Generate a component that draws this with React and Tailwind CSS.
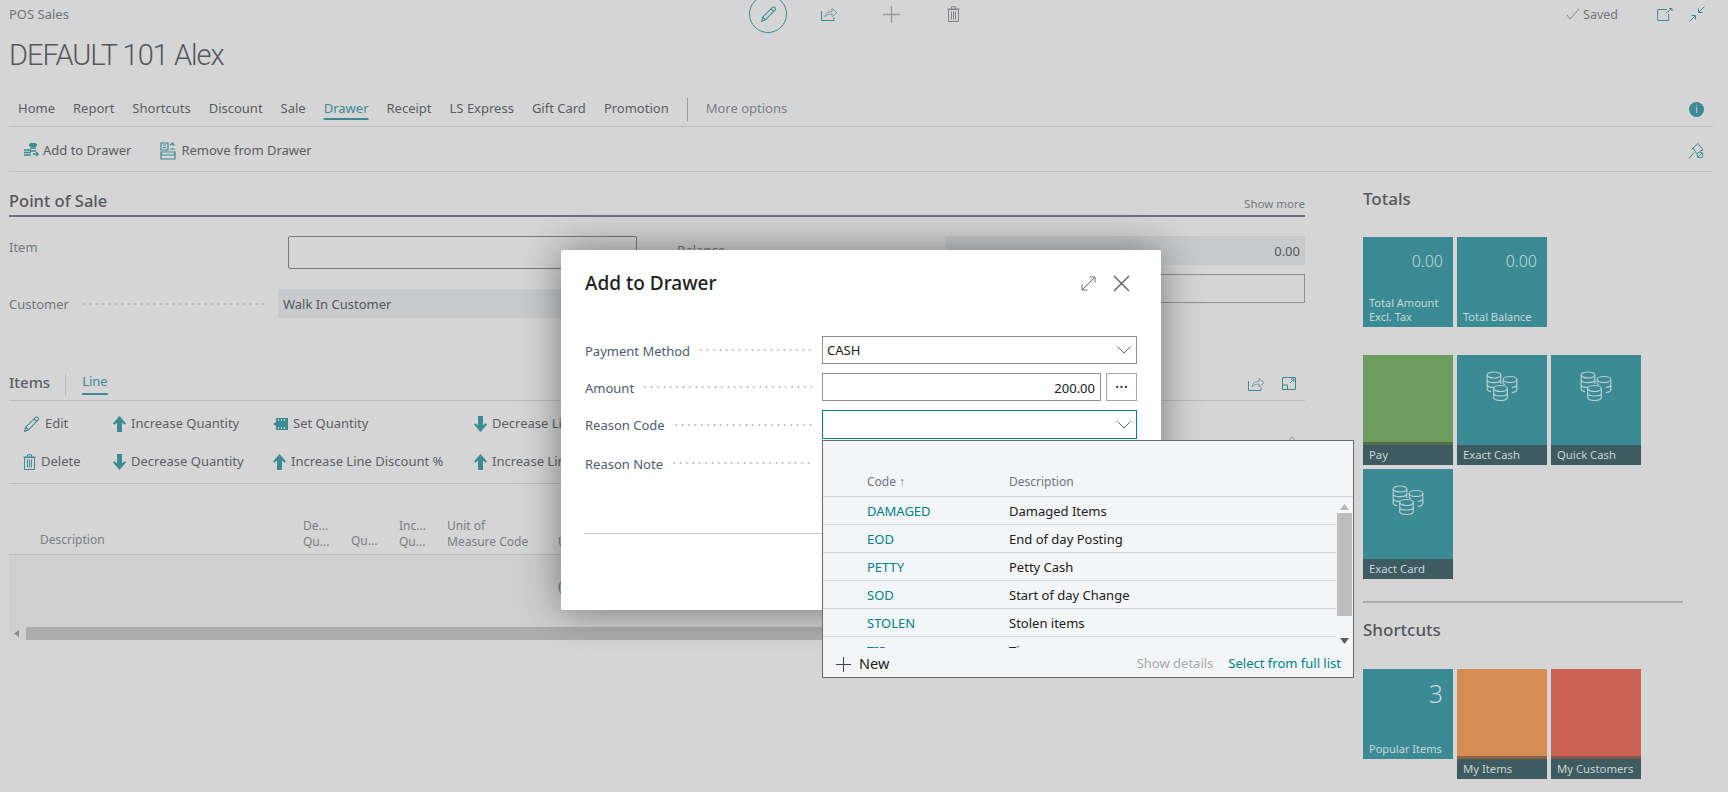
import React from 'react';

const TEAL = '#3c8a93';

// small stroked icon wrapper
const Ico = ({ w = 16, h = 16, vb = '0 0 16 16', color = TEAL, sw = 1, className = '', children }) => (
  <svg width={w} height={h} viewBox={vb} fill="none" stroke={color} strokeWidth={sw} className={`shrink-0 ${className}`}>
    {children}
  </svg>
);

const PencilIcon = ({ w = 17, h = 17, color = TEAL }) => (
  <Ico w={w} h={h} color={color}>
    <path d="M1.500 14.500l1-4L11.500 1.500c.8-.8 2-.8 2.600-.1s.6 1.800-.1 2.500L5 13.200l-3.500 1.300zM2.500 10.500l3 2.700M10.300 2.800l2.900 2.800" />
  </Ico>
);

const TrashIcon = ({ w = 13, h = 16, color = TEAL }) => (
  <Ico w={w} h={h} vb="0 0 13 16" color={color}>
    <path d="M1.500 3.500h10v12h-10zM.5 3h12M4.500 3V.8h4V3M4.500 5.500v8M6.500 5.500v8M8.500 5.500v8" />
  </Ico>
);

const ShareIcon = ({ color = TEAL }) => (
  <Ico w={17} h={15} vb="0 0 17 15" color={color}>
    <path d="M.5 5v9.500h12.500v-3" />
    <path d="M4 11c0-3.500 3-5.500 7-5.500V2.500l5 4.200-5 4.100V8c-3 0-5.500 1-7 3z" stroke="#7d9ea3" />
  </Ico>
);

const ArrowUp = () => (
  <svg width="13" height="16" viewBox="0 0 13 16" fill={TEAL} className="shrink-0">
    <path d="M6.500 0L13 7.500l-1.500 1.200L9 6.500V16H4V6.500L1.500 8.700 0 7.500z" />
  </svg>
);

const ArrowDown = () => (
  <svg width="13" height="16" viewBox="0 0 13 16" fill={TEAL} className="shrink-0">
    <path d="M6.500 16L13 8.500l-1.500-1.200L9 9.500V0H4v9.500L1.500 7.300 0 8.500z" />
  </svg>
);

const Coins = () => (
  <svg width="32" height="30" viewBox="0 0 32 30" fill="none" stroke="#b4ced1" strokeWidth="1.200">
    <ellipse cx="8" cy="4" rx="6.800" ry="3" />
    <path d="M1.200 4v14c0 1.200 1.500 2.200 3.800 2.700M14.800 4v9M1.200 8.700c0 1.700 3 3 6.800 3s6.800-1.300 6.800-3M1.200 13.400c0 1.700 3 3 6.800 3" />
    <ellipse cx="24" cy="8.500" rx="6.800" ry="3" />
    <path d="M17.200 8.500v4M30.800 8.500v10c0 1.500-2 2.700-5 3M30.800 13.400c0 1.500-2 2.700-5 3M17.200 12.700c1 .5 1.600.8 2 1" />
    <ellipse cx="14.500" cy="17.500" rx="6.800" ry="3" />
    <path d="M7.700 17.500v9c0 1.700 3 3 6.800 3s6.800-1.300 6.800-3v-9M7.700 22c0 1.700 3 3 6.800 3s6.800-1.300 6.800-3" />
  </svg>
);

const Chevron = () => (
  <svg width="14" height="8" viewBox="0 0 14 8" fill="none" stroke="#5f6b7a" className="shrink-0">
    <path d="M.5.5L7 7l6.500-6.500" />
  </svg>
);

const Dots = () => (
  <span className="flex-1 h-1 bg-[radial-gradient(circle,#adadad_0.8px,transparent_1.1px)] bg-[length:6.4px_4px] bg-repeat-x"></span>
);

const Tile = ({ value, valueClass = 'text-[16px]', label, color = 'bg-[#3c8a93]', bar, strip, coins }) => (
  <div className={`w-[90px] flex flex-col ${bar ? 'h-[110px]' : 'h-[90px]'}`}>
    <div className={`${color} flex-1 relative min-h-0 flex flex-col text-[#c3d8da]`}>
      {value && <div className={`text-right pr-[10px] pt-[12px] leading-[24px] font-light ${valueClass}`}>{value}</div>}
      {coins && <div className="flex justify-center pt-[16px]"><Coins /></div>}
      {!bar && <div className="mt-auto px-[6px] pb-[3px] text-[11px] leading-[14px]">{label}</div>}
    </div>
    {strip && <div className={`h-[3px] ${strip}`}></div>}
    {bar && <div className="h-[20px] bg-[#3d5b60] px-[6px] text-[11.300px] leading-[19px] text-[#c8d4d5] whitespace-nowrap">{label}</div>}
  </div>
);

const ActionItem = ({ icon, text }) => (
  <div className="flex items-center gap-[5px] whitespace-nowrap text-[13px] text-[#5c6066]">
    {icon}
    <span>{text}</span>
  </div>
);

const tabs = ['Home', 'Report', 'Shortcuts', 'Discount', 'Sale', 'Drawer', 'Receipt', 'LS Express', 'Gift Card', 'Promotion'];

const reasons = [
  ['DAMAGED', 'Damaged Items'],
  ['EOD', 'End of day Posting'],
  ['PETTY', 'Petty Cash'],
  ['SOD', 'Start of day Change'],
  ['STOLEN', 'Stolen items'],
  ['TIP', 'Tips'],
];

export default function App() {
  return (
    <div className="relative w-full h-[792px] overflow-hidden bg-[#d5d5d5] font-['Noto_Sans',sans-serif] text-[13px] text-[#5a5d62]">
      {/* page header */}
      <div className="flex items-center h-[28px] pl-[9px] pr-[23px]">
        <span className="w-[740px] pt-[2px] text-[13px] text-[#70747a]">POS Sales</span>
        <div className="w-[38px] h-[38px] shrink-0 rounded-full border border-[#3c8a93] flex items-center justify-center">
          <PencilIcon />
        </div>
        <div className="ml-[34px] -mt-[2px] flex"><ShareIcon /></div>
        <svg width="17" height="17" viewBox="0 0 17 17" stroke="#96999c" strokeWidth="1.300" className="ml-[45px] shrink-0"><path d="M8.500 0v17M0 8.500h17" /></svg>
        <div className="ml-[47px] flex"><TrashIcon color="#808386" /></div>
        <svg width="14" height="12" viewBox="0 0 14 12" fill="none" stroke="#85898d" className="ml-auto shrink-0"><path d="M1 7l3 4L13 1" /></svg>
        <span className="ml-[3px] pt-[2px] text-[12.500px] text-[#74787d]">Saved</span>
        <Ico w={16} h={13} vb="0 0 16 13" className="ml-[39px]"><path d="M10 1.500H.7v11h11V6M9 5l6-4.500M12 .5h3V3" /></Ico>
        <Ico w={16} h={16} className="ml-[16px]"><path d="M15.500.5L9.500 6.500M9.500 2.500v4h4M.5 15.500l6-6M6.500 13.500v-4h-4" /></Ico>
      </div>

      <h1 className="pl-[9px] mt-[8px] h-[38px] font-['Roboto',sans-serif] text-[29px] tracking-[-1px] leading-[38px] font-light text-[#54575c]">DEFAULT 101 Alex</h1>

      {/* tabs */}
      <div className="mx-[9px] mt-[19px] w-[1704px] flex items-center h-[34px] pb-[1px] border-b-[1.500px] border-[#bcbcbc] pl-[9px] relative">
        {tabs.map((t) => (
          <span key={t} className={`mr-[18px] whitespace-nowrap ${t === 'Drawer' ? "text-[#3c8a93] underline decoration-2 underline-offset-[5px]" : ''}`}>{t}</span>
        ))}
        <span className="w-px h-[23px] bg-[#9a9c9f]"></span>
        <span className="ml-[18px] text-[#7c8086]">More options</span>
        <span className="ml-auto mr-[9px] w-[15px] h-[15px] rounded-full bg-[#3c8a93] text-[#d5d5d5] text-[10px] leading-[15px] text-center">i</span>
      </div>

      {/* action bar */}
      <div className="mx-[9px] w-[1704px] h-[45px] pt-[3px] border-b-[1.500px] border-[#c0c0c0] flex items-center pl-[14px]">
        <div className="flex items-center gap-[4px]">
          <svg width="16" height="16" viewBox="0 0 16 16" fill="none" stroke={TEAL} strokeWidth="1.300" className="shrink-0">
            <ellipse cx="10" cy="2" rx="3.500" ry="1.500" fill={TEAL} />
            <path d="M1 7h7M1 9.500h7M1 12h7M7 5h6M10 11h5l-2-2M15 11l-2 2M7 8h6" />
          </svg>
          <span>Add to Drawer</span>
        </div>
        <div className="flex items-center gap-[5px] ml-[29px]">
          <svg width="16" height="18" viewBox="0 0 16 18" fill="none" stroke={TEAL} strokeWidth="1.200" className="shrink-0">
            <path d="M1 1h7v7H1zM3 3h3M3 5.500h3M1 10h14v3H1zM1 13h14v4H1zM10 3l3-2v2h2M10 7h5" />
          </svg>
          <span>Remove from Drawer</span>
        </div>
        <Ico w={16} h={16} className="ml-auto mr-[9px]"><path d="M1 15.500l5-6M5 5l5-4.500 5 6.500-3 1M5 5l3.500 5.500M5 5l-1.500 1.500" /><circle cx="12" cy="12" r="3" /><path d="M10 14l4-4" /></Ico>
      </div>

      <div className="flex">
        {/* left content */}
        <div className="w-[1296px] ml-[9px] shrink-0">
          <div className="mt-[20px] h-[25px] flex items-center justify-between border-b-2 border-[#6e7280]">
            <span className="text-[16.500px] font-medium text-[#54575c] -mt-[4px]">Point of Sale</span>
            <span className="text-[11.500px] text-[#74787d]">Show more</span>
          </div>

          <div className="flex mt-[19px]">
            <div className="w-[628px] shrink-0">
              <div className="flex h-[33px]">
                <span className="w-[279px] shrink-0 text-[#73777c] leading-[22px]">Item</span>
                <div className="flex-1 border border-[#76797d] rounded-[2px]"></div>
              </div>
              <div className="flex items-center h-[29px] mt-[20px]">
                <span className="text-[#73777c] mt-[2px]">Customer</span>
                <span className="ml-[12px] w-[186px] flex"><Dots /></span>
                <div className="ml-[11px] flex-1 h-full bg-[#c8cacc] pl-[5px] leading-[31px] text-[#54575c]">Walk In Customer</div>
              </div>
            </div>
            <div className="flex-1 pl-[40px]">
              <div className="flex h-[29px]">
                <span className="w-[269px] shrink-0 text-[#73777c] leading-[29px]">Balance</span>
                <div className="flex-1 bg-[#c8cacc] text-right pr-[5px] leading-[30px] text-[#54575c]">0.00</div>
              </div>
              <div className="flex h-[29px] mt-[9px]">
                <span className="w-[269px] shrink-0"></span>
                <div className="flex-1 border border-[#8d9095]"></div>
              </div>
            </div>
          </div>

          {/* items part */}
          <div className="mt-[51px] h-[32px] flex items-center border-b-[1.500px] border-[#bcbcbc] relative">
            <span className="text-[15px] font-medium text-[#5c6066] -mt-[5px]">Items</span>
            <span className="ml-[15px] w-px h-[23px] bg-[#b9bbbd]"></span>
            <span className="ml-[16px] -mt-[5px] text-[#3c8a93] underline decoration-2 underline-offset-[7px]">Line</span>
            <div className="ml-auto flex items-center gap-[17px] mr-[9px] -mt-[2px]">
              <ShareIcon />
              <Ico w={14} h={13} vb="0 0 14 13"><path d="M.5.5h13v12H.5zM.5 8h5v4.500M8 6l4-4M9 2h3v3" /></Ico>
            </div>
          </div>

          <div className="pt-[4px] h-[83px] border-b-[1.500px] border-[#bcbcbc] grid grid-cols-[90px_160px_201px_1fr_auto] grid-rows-[38px_38px] items-center pl-[14px]">
            <ActionItem icon={<PencilIcon />} text="Edit" />
            <ActionItem icon={<ArrowUp />} text="Increase Quantity" />
            <ActionItem icon={<svg width="15" height="14" viewBox="0 0 15 14" fill={TEAL} className="shrink-0"><path d="M3 1h12v12H3zM0 7l3-2v4z" /><path d="M5 2h1v2H5zM8 2h1v2H8zM11 2h1v2h-1zM5 10h1v2H5zM8 10h1v2H8zM11 10h1v2h-1z" fill="#d5d5d5" /></svg>} text="Set Quantity" />
            <ActionItem icon={<ArrowDown />} text="Decrease Line Discount %" />
            <svg width="12" height="7" viewBox="0 0 12 7" fill="none" stroke="#8d9095" className="mr-[7px] self-end"><path d="M1 6.500l5-5.500 5 5.500" /></svg>
            <ActionItem icon={<TrashIcon />} text="Delete" />
            <ActionItem icon={<ArrowDown />} text="Decrease Quantity" />
            <ActionItem icon={<ArrowUp />} text="Increase Line Discount %" />
            <ActionItem icon={<ArrowUp />} text="Increase Line Amount" />
          </div>

          {/* table */}
          <div className="h-[71px] flex items-end border-b-[1.500px] border-[#bcbcbc] pl-[31px] pb-[4px] text-[12px] leading-[16px] text-[#7a7e84]">
            <span className="w-[263px] mb-[2px]">Description</span>
            <span className="w-[48px]">De...<br />Qu...</span>
            <span className="w-[48px] mb-[1px]">Qu...</span>
            <span className="w-[48px]">Inc...<br />Qu...</span>
            <span className="w-[111px]">Unit of<br />Measure Code</span>
            <span>Unit</span>
          </div>
          <div className="h-[72px] bg-[#cfcfcf] pl-[549px] pt-[22px] text-[#73777c]">(There is nothing to show in this view)</div>
          <div className="h-[13px] bg-[#d0d0d0] flex items-center">
            <svg width="17" height="9" viewBox="0 0 17 9" className="shrink-0"><path d="M5 4.500L10 1v7z" fill="#8a8a8a" /></svg>
            <div className="flex-1 h-full bg-[#adadad]"></div>
          </div>
        </div>

        {/* right factboxes */}
        <div className="ml-[58px] w-[320px] shrink-0">
          <div className="mt-[16px] h-[22px] text-[17px] leading-[22px] font-medium text-[#54575c]">Totals</div>
          <div className="mt-[27px] flex gap-[4px]">
            <Tile value="0.00" label={<>Total Amount<br />Excl. Tax</>} />
            <Tile value="0.00" label="Total Balance" />
          </div>
          <div className="mt-[28px] flex flex-wrap gap-[4px] w-[278px]">
            <Tile bar label="Pay" color="bg-[#6c9c5e]" strip="bg-[#5a6b47]" />
            <Tile bar coins label="Exact Cash" />
            <Tile bar coins label="Quick Cash" />
            <Tile bar coins label="Exact Card" />
          </div>
          <div className="mt-[22px] h-[2px] bg-[#a9abae]"></div>
          <div className="mt-[16px] h-[22px] text-[17px] leading-[22px] font-medium text-[#54575c]">Shortcuts</div>
          <div className="mt-[28px] flex items-start gap-[4px]">
            <Tile value="3" valueClass="text-[25px]" label="Popular Items" />
            <Tile bar label="My Items" color="bg-[#d58c55]" strip="bg-[#8c6345]" />
            <Tile bar label="My Customers" color="bg-[#cc6253]" strip="bg-[#86544c]" />
          </div>
        </div>
      </div>

      {/* modal dialog */}
      <div className="absolute left-[561px] top-[250px] w-[600px] h-[360px] bg-white rounded-[2px] shadow-[0_0_40px_rgba(0,0,0,0.45)] px-[24px] text-[#505c6d]">
        <div className="flex items-center h-[24px] mt-[21px]">
          <h2 className="text-[19px] font-medium text-[#212121] leading-[24px]">Add to Drawer</h2>
          <svg width="15" height="15" viewBox="0 0 15 15" fill="none" stroke="#6f6f6f" className="ml-auto shrink-0"><path d="M1 14L14 1M8.500 1H14v5.500M1 8.500V14h5.500" /></svg>
          <svg width="17" height="17" viewBox="0 0 17 17" fill="none" stroke="#5a5a5a" strokeWidth="1.300" className="ml-[17px] mr-[7px] shrink-0"><path d="M1 1l15 15M16 1L1 16" /></svg>
        </div>

        <div className="mt-[41px] flex flex-col gap-[9px]">
          <div className="flex items-center h-[28px]">
            <span className="whitespace-nowrap mt-[3px]">Payment Method</span>
            <span className="ml-[8px] flex-1 flex"><Dots /></span>
            <div className="ml-[10px] w-[315px] h-full border border-[#8d9095] flex items-center justify-between pl-[4px] pr-[5px] text-[#212121]">
              <span className="mt-[2px]">CASH</span><Chevron />
            </div>
          </div>
          <div className="flex items-center h-[28px]">
            <span className="mt-[3px]">Amount</span>
            <span className="ml-[8px] flex-1 flex"><Dots /></span>
            <div className="ml-[10px] w-[279px] h-full border border-[#8d9095] text-right pr-[5px] leading-[28px] text-[#212121]">200.00</div>
            <div className="ml-[5px] w-[31px] h-full border border-[#a6a6a6] text-center text-[16px] leading-[26px] text-[#212121]">···</div>
          </div>
          <div className="flex items-center h-[29px]">
            <span className="mt-[3px]">Reason Code</span>
            <span className="ml-[8px] flex-1 flex"><Dots /></span>
            <div className="ml-[10px] w-[315px] h-full border border-[#00818a] flex items-center justify-end pr-[5px]"><Chevron /></div>
          </div>
          <div className="flex items-center h-[28px] mt-[1px]">
            <span className="mt-[3px]">Reason Note</span>
            <span className="ml-[8px] flex-1 flex"><Dots /></span>
            <div className="ml-[10px] w-[315px]"></div>
          </div>
        </div>
        <div className="mt-[56px] h-px bg-[#c8c8c8]"></div>

        {/* lookup dropdown */}
        <div className="absolute left-[261px] top-[190px] w-[532px] h-[238px] border border-[#6b6b6b] bg-[#f4f5f7] flex flex-col">
          <div className="h-[56px] shrink-0 flex items-end pb-[6px] pl-[44px] text-[12px] leading-[16px] text-[#6e7681] border-b-[1.500px] border-[#d5d7da]">
            <span className="w-[142px]">Code ↑</span>
            <span>Description</span>
          </div>
          <div className="h-[151px] shrink-0 flex overflow-hidden">
            <div className="w-[513px] shrink-0">
              {reasons.map(([code, desc]) => (
                <div key={code} className="h-[28px] flex items-center pl-[44px] pt-[2px] border-b border-[#d5d7da]">
                  <span className="w-[142px] text-[#00818a]">{code}</span>
                  <span className="text-[#212121]">{desc}</span>
                </div>
              ))}
            </div>
            <div className="w-[15px] ml-[1px] flex flex-col items-center">
              <svg width="9" height="6" viewBox="0 0 9 6" className="mt-[7px] shrink-0"><path d="M4.500 0L9 6H0z" fill="#b8b8b8" /></svg>
              <div className="w-full h-[103px] mt-[3px] bg-[#bdbdbd]"></div>
              <svg width="9" height="6" viewBox="0 0 9 6" className="mt-[22px] shrink-0"><path d="M4.500 6L9 0H0z" fill="#5e5e5e" /></svg>
            </div>
          </div>
          <div className="flex-1 flex items-center pl-[13px] pr-[12px] pt-[3px]">
            <svg width="15" height="15" viewBox="0 0 15 15" stroke="#444" className="shrink-0"><path d="M7.500 0v15M0 7.500h15" /></svg>
            <span className="ml-[8px] text-[14.500px] text-[#212121]">New</span>
            <span className="ml-auto text-[#a9abae]">Show details</span>
            <span className="ml-[15px] text-[#00818a]">Select from full list</span>
          </div>
        </div>
      </div>
    </div>
  );
}
